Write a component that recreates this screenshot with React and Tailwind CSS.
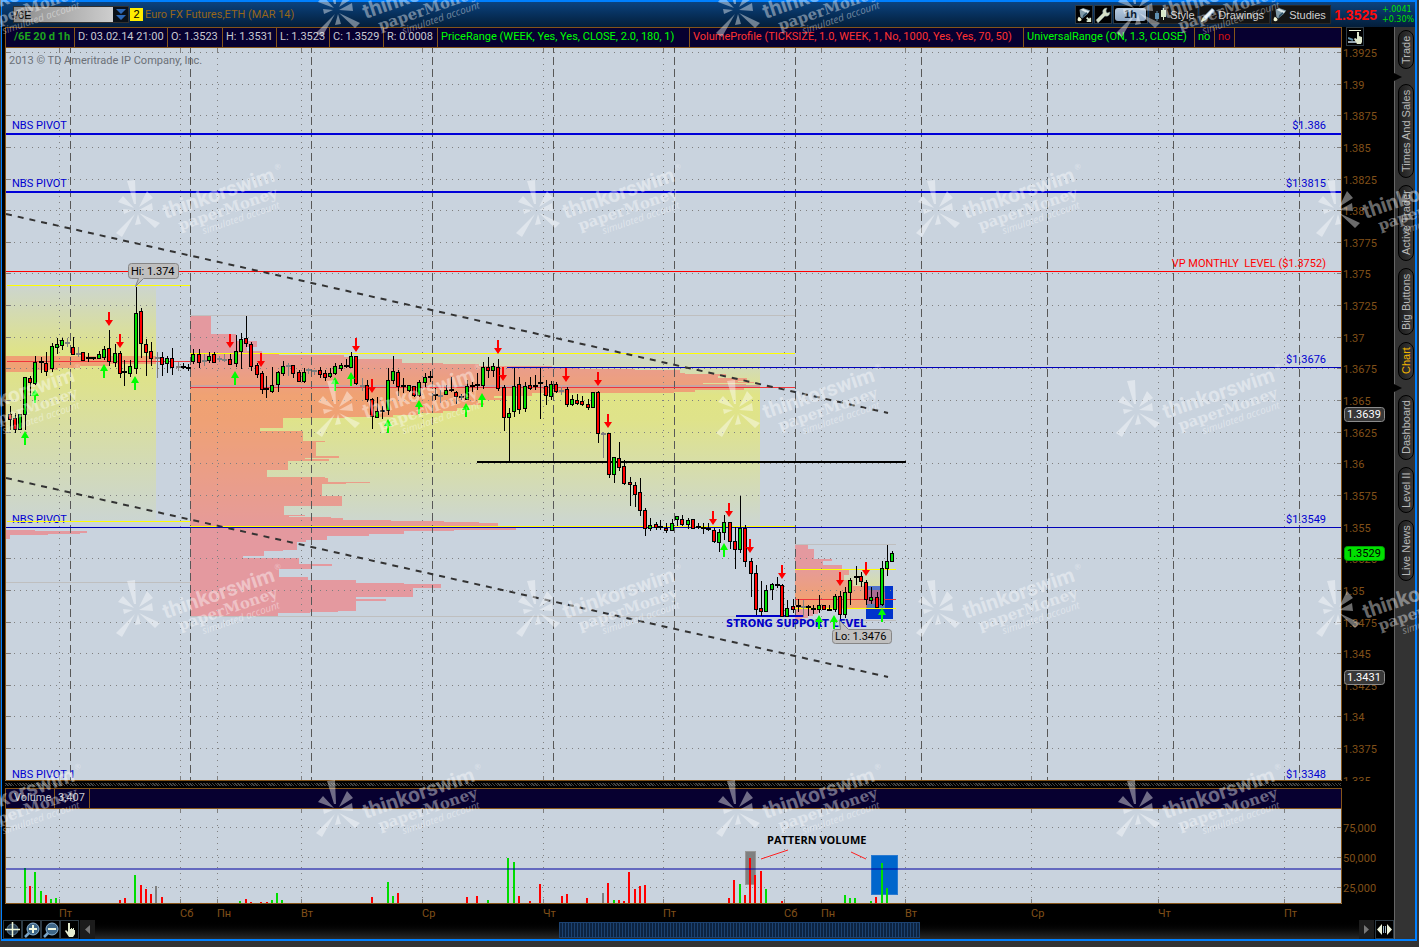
import React from "react";

const UP = "#00dd00";
const DOWN = "#ff0000";

// x, body top, body bottom, high, low, kind (g up, r down, k doji, x flat)
const CANDLES = `10,414,419,406,430,r 15,418,429,413,433,r 20,414,429,414,430,g 25,377,414,377,430,g 30,378,382,376,396,r
35,362,383,356,385,g 41,362,362,357,373,k 46,363,371,352,376,r 52,346,368,343,372,g 57,344,347,338,354,g 62,340,345,338,350,g
67,343,343,338,347,x 73,347,354,337,355,r 78,354,354,347,357,x 83,352,360,352,360,r 88,358,358,353,362,k 93,358,358,357,360,k
99,354,358,351,359,g 104,349,357,346,360,g 109,348,361,330,366,r 115,353,362,344,367,g 120,353,373,351,378,r 124,372,372,360,386,k
130,366,373,360,377,g 136,313,368,287,374,g 141,311,343,308,358,r 146,344,352,339,376,r 151,351,358,342,366,r 157,358,358,352,378,x
162,357,364,352,376,r 167,358,363,356,373,g 172,358,367,348,375,r 178,367,367,362,371,x 183,367,367,363,369,k 188,368,368,364,371,k
193,354,361,349,364,g 199,354,362,349,368,r 204,361,361,354,366,x 209,356,360,352,363,g 214,354,362,352,362,r 219,359,359,356,362,x
224,360,360,354,362,x 230,359,364,354,365,r 236,351,363,335,367,g 241,339,351,333,369,g 246,338,343,316,347,r 251,344,366,342,371,r
257,365,374,363,378,r 262,373,389,371,394,r 266,389,389,376,398,k 272,385,391,367,393,g 278,372,384,371,392,g 283,366,373,361,376,g
288,366,366,363,376,x 293,365,373,365,378,r 299,372,381,370,382,r 304,372,381,368,383,g 308,370,370,368,374,x 314,371,371,370,375,x
320,370,374,367,378,r 325,373,377,370,381,r 330,373,376,368,378,g 335,366,373,363,375,g 341,365,368,363,371,g 346,366,366,359,368,k
351,356,367,352,368,g 356,356,383,356,385,r 362,386,386,378,391,x 367,385,399,380,402,r 372,399,416,398,429,r 377,411,417,397,417,g
382,411,411,406,419,k 388,380,410,368,415,g 393,371,380,356,384,g 398,372,386,370,396,r 403,386,386,378,393,k 409,385,390,385,392,g
414,386,395,386,397,r 419,382,395,380,397,g 425,377,382,373,387,g 430,377,377,371,382,k 435,395,395,388,400,k 440,396,396,390,403,x
446,390,394,385,395,g 451,390,390,377,392,k 456,392,396,391,404,r 461,397,397,394,400,k 467,386,399,380,400,g 472,386,386,382,392,k
477,385,385,373,390,k 483,367,385,362,389,g 488,367,370,357,378,r 493,366,370,363,377,g 498,367,388,359,391,r 504,387,417,385,431,r
509,413,417,408,462,g 514,386,411,368,417,g 519,384,409,377,414,r 525,386,408,382,412,g 530,385,388,377,390,r 535,386,386,375,390,k
540,383,383,368,419,k 546,386,395,380,405,r 551,384,396,381,400,g 556,384,391,382,393,r 561,391,391,387,395,x 567,389,404,387,407,r
572,399,404,395,406,g 577,400,403,394,405,r 582,401,404,396,406,r 588,404,407,399,410,r 593,392,407,392,407,g 598,392,433,391,443,r
603,434,434,432,458,x 609,433,474,433,478,r 614,457,474,457,483,g 619,458,467,442,471,r 624,466,483,460,485,r 630,482,484,477,506,r
635,485,494,482,507,r 640,492,510,478,516,r 645,510,528,508,536,r 650,525,528,518,531,g 656,524,527,522,530,r 660,527,527,520,530,k
666,528,530,523,533,r 672,523,530,519,531,g 677,516,519,516,526,g 682,519,524,515,526,r 688,520,524,518,529,g 693,519,528,519,528,r
698,527,527,523,529,k 703,528,528,523,534,k 708,529,529,523,531,k 714,530,541,528,543,r 719,532,542,529,552,g 724,522,532,515,540,g
730,522,541,522,549,r 735,541,549,527,569,r 740,528,549,496,553,g 745,528,561,525,567,r 751,561,573,558,597,r 756,573,609,565,615,r
761,608,611,581,616,r 766,590,611,585,612,g 772,584,589,583,600,g 777,585,585,577,588,k 782,585,616,584,616,r 787,608,616,600,616,g
793,606,609,599,613,r 798,606,606,599,612,k 803,607,607,600,617,x 808,607,607,605,616,k 813,609,609,605,614,k 819,605,609,595,613,g
824,605,609,605,610,r 829,610,610,605,611,k 835,596,609,594,612,g 840,596,614,591,622,r 845,592,614,587,618,g 850,580,592,578,605,g
856,577,577,566,585,k 861,576,581,572,587,r 866,582,599,580,605,r 871,597,600,587,604,g 877,597,607,592,608,r 882,568,604,561,606,g
887,561,568,545,576,g 892,553,561,551,561,g`
  .split(/\s+/)
  .map((row) => {
    const [x, top, bottom, high, low, kind] = row.split(",");
    return { x: +x, top: +top, bottom: +bottom, high: +high, low: +low, kind };
  });

const SELL = [[109, 326], [120, 348], [230, 348], [261, 367], [356, 352], [372, 393], [498, 354], [503, 381], [566, 382], [598, 386], [608, 428], [713, 525], [729, 517], [750, 553], [782, 579], [840, 586], [866, 576]];
const BUY = [[25, 431], [35, 389], [104, 364], [135, 376], [235, 371], [335, 377], [351, 372], [388, 419], [419, 400], [466, 403], [482, 393], [724, 543], [819, 615], [834, 615], [882, 608]];

// [y, x]: from the previous y down to this one the profile reaches to x
const PROFILE_A = [[315, 211], [334, 236], [341, 257], [347, 247], [351, 262], [354, 279], [355, 344], [357, 353], [359, 402], [363, 443], [364, 479], [366, 552], [368, 580], [369, 635], [370, 680], [373, 685], [374, 726], [376, 718], [378, 747], [381, 738], [382, 754], [383, 703], [384, 746], [385, 760], [388, 744], [390, 695], [392, 674], [393, 532], [396, 494], [398, 502], [400, 478], [403, 484], [405, 466], [408, 457], [411, 443], [413, 418], [415, 393], [417, 345], [418, 283], [428, 260], [431, 303], [441, 325], [442, 316], [456, 339], [458, 305], [459, 329], [461, 288], [470, 267], [477, 325], [478, 328], [482, 370], [483, 346], [484, 322], [496, 342], [506, 284], [515, 305], [516, 289], [517, 331], [518, 343], [520, 391], [521, 444], [522, 479], [523, 498], [528, 516], [530, 454], [531, 404], [534, 369], [536, 327], [540, 306], [542, 297], [550, 283], [551, 264], [556, 243], [558, 299], [564, 332], [566, 312], [569, 279], [577, 308], [580, 356], [583, 404], [584, 441], [588, 413], [597, 356], [599, 386], [601, 356], [611, 338], [612, 310], [613, 278], [616, 190]];
const PROFILE_B = [[544, 808], [549, 814], [559, 832], [561, 823], [565, 842], [570, 849], [575, 844], [580, 853], [586, 865], [590, 880], [592, 885], [604, 867], [608, 820], [612, 818], [614, 813], [616, 808], [618, 802], [620, 795]];
const PROFILE_C = [[356, 156], [364, 110], [366, 80], [368, 58], [370, 36], [372, 6]];
const PROFILE_D = [[530, 35], [531, 87], [533, 80], [534, 48], [535, 10], [539, 6]];

const steps = (x0, rows) => `M${x0} ${rows[0][0]}${rows.map(([y, x]) => `V${y}H${x}`).join("")}H${x0}Z`;

const DOTTED = [59, 180, 217, 301, 422, 543, 663, 784, 821, 905, 1031, 1158, 1284];
const DASHED = [70, 190, 311, 432, 553, 674, 795, 921, 1047, 1173, 1299];
const DAYS = ["Пт", "Сб", "Пн", "Вт", "Ср", "Чт", "Пт", "Сб", "Пн", "Вт", "Ср", "Чт", "Пт"];
const PRICES = ["1.3925", "1.39", "1.3875", "1.385", "1.3825", "1.38", "1.3775", "1.375", "1.3725", "1.37", "1.3675", "1.365", "1.3625", "1.36", "1.3575", "1.355", "1.3525", "1.35", "1.3475", "1.345", "1.3425", "1.34", "1.3375", "1.335"];

const VOLUME = `25,868,g 30,886,r 35,872,g 41,891,g 46,895,r 51,899,g 56,898,g 120,900,r 125,898,r 135,875,g 141,885,r 146,889,r 151,894,r 156,886,x
162,897,r 240,901,g 246,899,r 251,902,r 261,902,r 267,902,r 272,900,g 277,893,g 282,900,g 372,897,r 388,882,g 393,896,g 398,893,r 467,897,r 477,896,r 488,900,g
508,858,g 514,862,g 519,896,r 530,901,r 540,884,r 562,896,r 567,894,r 587,898,r 603,893,x 608,883,r 614,900,g 619,900,r 624,901,r 629,872,r
635,889,r 640,886,r 645,885,r 729,898,r 734,880,r 740,884,g 745,895,r 750,858,r 755,875,r 761,871,r 766,889,g 782,901,r 845,895,g
850,898,g 855,898,g 871,901,g 876,897,r 882,863,g 887,888,g`
  .split(/\s+/)
  .map((row) => row.split(","));

function Candle({ x, top, bottom, high, low, kind }) {
  if (kind === "k" || kind === "x") {
    const fill = kind === "k" ? "#000" : "#808080";
    return (
      <g fill={fill}>
        <rect x={x} y={high} width="1" height={low - high} />
        <rect x={x - 2} y={top - 1} width="5" height="2" />
      </g>
    );
  }
  return (
    <g>
      <rect x={x} y={high} width="1" height={low - high} fill="#000" />
      <rect x={x - 2} y={top} width="4" height={Math.max(bottom - top + 1, 3)} fill="#000" />
      <rect x={x - 1} y={top + 1} width="2" height={Math.max(bottom - top - 1, 1)} fill={kind === "g" ? UP : DOWN} />
    </g>
  );
}

function PriceTag({ y, text, fill, stroke, color }) {
  return (
    <g>
      <rect x="1344.5" y={y + 0.5} width="40" height="14" rx="3" fill={fill} stroke={stroke} />
      <text x="1347" y={y + 11} fill={color}>{text}</text>
    </g>
  );
}

function PriceChart() {
  const gridY = PRICES.map((_, i) => Math.round(52 + i * 31.64));
  return (
    <svg viewBox="5 48 1389 733" className="block h-auto w-full font-['Roboto',sans-serif] text-[11px]" role="img" aria-label="Price chart">
      <defs>
        <linearGradient id="rangeA" x1="0" y1="0" x2="0" y2="1">
          <stop offset="0" stopColor="#ccd5ce" />
          <stop offset="0.28" stopColor="#dfe388" />
          <stop offset="0.4" stopColor="#dee28c" />
          <stop offset="1" stopColor="#cbd5d2" />
        </linearGradient>
        <linearGradient id="rangeB" x1="0" y1="0" x2="0" y2="1">
          <stop offset="0" stopColor="#cdd6cf" />
          <stop offset="0.24" stopColor="#e0e486" />
          <stop offset="0.38" stopColor="#dfe38a" />
          <stop offset="1" stopColor="#ccd6d2" />
        </linearGradient>
        <linearGradient id="rangeC" x1="0" y1="0" x2="0" y2="1">
          <stop offset="0" stopColor="#cdd6cf" />
          <stop offset="0.75" stopColor="#dfe38a" />
          <stop offset="1" stopColor="#e0e486" />
        </linearGradient>
      </defs>
      <rect x="5" y="48" width="1337" height="733" fill="#c9d3de" />

      <rect x="6" y="286" width="150" height="236" fill="url(#rangeA)" />
      <rect x="190" y="354" width="570" height="172" fill="url(#rangeB)" />
      <rect x="795" y="569" width="90" height="39" fill="url(#rangeC)" />
      <rect x="866" y="586" width="27" height="33" fill="#0033cc" />
      <rect x="866" y="586" width="19" height="22" fill="url(#rangeC)" opacity="0.4" />
      <g fill="#ff6060" fillOpacity="0.5" shapeRendering="crispEdges">
        <path d={steps(6, PROFILE_C)} />
        <path d={steps(6, PROFILE_D)} />
        <path d={steps(190, PROFILE_A)} />
        <path d={steps(795, PROFILE_B)} />
      </g>
      <rect x="190" y="385" width="570" height="2" fill="#b9a4b4" fillOpacity="0.7" />

      <g shapeRendering="crispEdges" fill="none">
        <g stroke="#808080">
          {gridY.map((y) => (
            <g key={y}>
              <path d={`M6 ${y}.5H11M1337 ${y}.5H1341`} />
              <path d={`M14 ${y}.5H1341`} strokeDasharray="1 5" />
            </g>
          ))}
          {DOTTED.map((x) => (
            <g key={x}>
              <path d={`M${x}.5 48V53M${x}.5 776V780`} />
              <path d={`M${x}.5 58V776`} strokeDasharray="1 5" />
            </g>
          ))}
        </g>
        {DASHED.map((x) => (
          <path key={x} d={`M${x}.5 48V780`} stroke="#585858" strokeDasharray="8 4" strokeDashoffset="3" />
        ))}
        <path d="M6 582.5H190M190 315.5H795M190 616.5H795M795 544.5H896M795 620.5H896" stroke="#bfbfbf" />
      </g>

      <g fill="#0000d0">
        <text x="12" y="129">NBS PIVOT</text>
        <text x="12" y="187">NBS PIVOT</text>
        <text x="12" y="523">NBS PIVOT</text>
        <text x="12" y="778">NBS PIVOT 1</text>
        <g textAnchor="end">
          <text x="1326" y="129">$1.386</text>
          <text x="1326" y="187">$1.3815</text>
          <text x="1326" y="363">$1.3676</text>
          <text x="1326" y="523">$1.3549</text>
          <text x="1326" y="778">$1.3348</text>
          <text x="1326" y="267" fill="#ff0000">VP MONTHLY&#160; LEVEL ($1.3752)</text>
        </g>
      </g>
      <text x="9" y="64" fill="#6b7077">2013 © TD Ameritrade IP Company, Inc.</text>

      <g shapeRendering="crispEdges" fill="none">
        <path d="M6 134H1341M6 192H1341" stroke="#0000d8" strokeWidth="2" />
        <path d="M6 271.5H1341" stroke="#ff0000" />
        <path d="M507 367.5H1341M6 527.5H1341" stroke="#0000b8" />
        <path d="M7 285.5H190M7 521.5H190M190 353.5H795M190 526.5H795M795 569.5H896" stroke="#ffff00" />
        <path d="M795 608.5H896" stroke="#ffff00" strokeWidth="1" />
        <path d="M7 361.5H190M190 387.5H795M795 599.5H896" stroke="#f0343c" />
        <path d="M477 462H906" stroke="#000" strokeWidth="2" />
        <path d="M736 616H803" stroke="#0000c8" strokeWidth="2" />
      </g>
      <path d="M6 214L888 413M6 478L888 677" stroke="#333" strokeWidth="2" strokeDasharray="6 6" fill="none" />

      <g shapeRendering="crispEdges">
        {CANDLES.map((c) => <Candle key={c.x} {...c} />)}
      </g>
      <text x="726" y="627" fill="#0000c8" className="font-['DejaVu_Sans',sans-serif] text-[10px] font-bold">STRONG SUPPORT LEVEL</text>
      {SELL.map(([x, y]) => (
        <path key={`${x}-${y}`} fill="#ff0000" d={`M${x} ${y}l-4 -6h3v-8h2v8h3z`} />
      ))}
      {BUY.map(([x, y]) => (
        <path key={`${x}-${y}`} fill="#00ff00" d={`M${x} ${y}l-4 7h3v7h2v-7h3z`} />
      ))}

      <g fill="#bfbfbf" stroke="#858585">
        <path d="M131.500 263.500h44a3 3 0 0 1 3 3v9a3 3 0 0 1 -3 3h-32l-8 8l3 -8h-7a3 3 0 0 1 -3 -3v-9a3 3 0 0 1 3 -3z" />
        <path d="M835.500 629.500h5l-1 -9l9 9h40a3 3 0 0 1 3 3v8a3 3 0 0 1 -3 3h-53a3 3 0 0 1 -3 -3v-8a3 3 0 0 1 3 -3z" />
      </g>
      <text x="131" y="275">Hi: 1.374</text>
      <text x="835" y="640">Lo: 1.3476</text>

      <path d="M5.500 48V780.500H1341.500V48" fill="none" stroke="#855419" />
      <g fill="#805019">
        {PRICES.map((p, i) => (
          <text key={p} x="1343" y={gridY[i] + 5}>{p}</text>
        ))}
      </g>
      <PriceTag y={407} text="1.3639" fill="#383838" stroke="#8c8c8c" color="#fff" />
      <PriceTag y={546} text="1.3529" fill="#00e000" stroke="#00a000" color="#000" />
      <PriceTag y={670} text="1.3431" fill="#383838" stroke="#8c8c8c" color="#fff" />
    </svg>
  );
}

function VolumeChart() {
  return (
    <svg viewBox="5 809 1389 111" className="block h-auto w-full font-['Roboto',sans-serif] text-[11px]" role="img" aria-label="Volume chart">
      <rect x="5" y="809" width="1337" height="95" fill="#c9d3de" />
      <g shapeRendering="crispEdges" stroke="#808080" fill="none">
        {[827, 857, 887].map((y) => (
          <g key={y}>
            <path d={`M6 ${y}.5H11M1337 ${y}.5H1341`} />
            <path d={`M14 ${y}.5H1341`} strokeDasharray="1 5" />
          </g>
        ))}
        {DOTTED.map((x) => (
          <g key={x}>
            <path d={`M${x}.5 809V813M${x}.5 899V903`} />
            <path d={`M${x}.5 819V899`} strokeDasharray="1 5" />
          </g>
        ))}
      </g>
      <rect x="745.5" y="851.5" width="10" height="33" fill="#808080" stroke="#999" />
      <rect x="871.5" y="855.5" width="26" height="39" fill="#0066cc" stroke="#2a7ad0" />
      <g shapeRendering="crispEdges">
        {VOLUME.map(([x, y, k]) => (
          <rect key={x} x={+x - 1} y={+y} width="2" height={903 - y} fill={k === "g" ? UP : k === "r" ? DOWN : "#808080"} />
        ))}
      </g>
      <rect x="6" y="868" width="1335" height="2" fill="#0000a0" fillOpacity="0.5" />
      <path d="M788 850L761 859M851 852L866 859" stroke="#ff2020" fill="none" />
      <text x="767" y="844" className="font-['Open_Sans',sans-serif] text-[11px] font-bold">PATTERN VOLUME</text>
      <path d="M5.500 809V903.500H1341.500V809" fill="none" stroke="#855419" />
      <g fill="#805019">
        <text x="1343" y="832">75,000</text>
        <text x="1343" y="862">50,000</text>
        <text x="1343" y="892">25,000</text>
        {DAYS.map((d, i) => (
          <text key={DOTTED[i]} x={DOTTED[i]} y="917">{d}</text>
        ))}
      </g>
    </svg>
  );
}

const FIELDS = [
  ["/6E 20 d 1h", "w-[69px] pl-2 font-bold text-[#1ea51e]"],
  ["D: 03.02.14 21:00", "w-[93px] pl-[3px] text-[#c8c8d0]"],
  ["O: 1.3523", "w-[55px] pl-[3px] text-[#c8c8d0]"],
  ["H: 1.3531", "w-[54px] pl-[3px] text-[#c8c8d0]"],
  ["L: 1.3523", "w-[53px] pl-[3px] text-[#c8c8d0]"],
  ["C: 1.3529", "w-[54px] pl-[3px] text-[#c8c8d0]"],
  ["R: 0.0008", "w-[54px] pl-[3px] text-[#c8c8d0]"],
  ["PriceRange (WEEK, Yes, Yes, CLOSE, 2.0, 180, 1)", "w-[252px] pl-[3px] text-[#00ff00]"],
  ["VolumeProfile (TICKSIZE, 1.0, WEEK, 1, No, 1000, Yes, Yes, 70, 50)", "w-[334px] pl-[3px] text-[#ff3232]"],
  ["UniversalRange (ON, 1.3, CLOSE)", "w-[171px] pl-[3px] text-[#00ff00]"],
  ["no", "w-[20px] pl-[3px] text-[#00ff00]"],
  ["no", "w-[20px] pl-[3px] text-[#d01010]"],
];

const TABS = [
  ["Trade", "h-[39px] mb-[15px]"],
  ["Times And Sales", "h-[94px] mb-[7px]"],
  ["Active Trader", "h-[76px] mb-[7px]"],
  ["Big Buttons", "h-[67px] mb-[7px]"],
  ["Chart", "h-[38px] mb-[15px]"],
  ["Dashboard", "h-[65px] mb-[7px]"],
  ["Level II", "h-[46px] mb-[7px]"],
  ["Live News", "h-[61px]"],
];

function Flask() {
  return (
    <>
      <path d="M4 3l4-2 8 3-3 4-6 5-2-2z" fill="#7f9aa8" />
      <path d="M5 3l3-1 7 3-2 2z" fill="#dce8ea" />
      <path d="M8 9l4-3 1 1-6 6z" fill="#2f5268" />
      <path d="M3 11q-3 5 1 5 4-1 1-4z" fill="#f4f8d8" />
    </>
  );
}

function Tool({ label, className, children }) {
  return (
    <button aria-label={label} className={`flex h-[19px] shrink-0 items-center justify-center border border-[#2d3a44] bg-black ${className}`}>
      {children}
    </button>
  );
}

const WATERMARKS = [
  ...[10, 410, 810].flatMap((y) => [-64, 336, 736, 1136].map((x) => [x, y])),
  ...[210, 610].flatMap((y) => [136, 536, 936, 1336].map((x) => [x, y])),
];

function Watermark() {
  return (
    <svg className="pointer-events-none absolute inset-0 h-full w-full" aria-hidden="true">
      {WATERMARKS.map(([x, y]) => (
        <g key={`${x}-${y}`} transform={`translate(${x} ${y})`} fill="#fff" fillOpacity="0.42">
          <path d="M-9 -29L-1 -30L0 -6H-2zM11 -19L17 -12L3 -3zM-13 -14L-18 -8L-2 -2zM-13 -1L-12 4L-3 0zM16 -7L17 1L3 0zM24 13L19 18L3 3zM-1 15L5 14L2 4zM-20 23L-14 27L-1 4z" />
          <g transform="rotate(-19)">
            <text x="25" y="18" className="font-['Roboto',sans-serif] text-[21px] font-bold">thinkorswim</text>
            <text x="35" y="34" className="font-['DejaVu_Serif',serif] text-[15px] font-bold">paperMoney</text>
            <text x="56" y="45" className="font-['Open_Sans',sans-serif] text-[10px] italic">simulated account</text>
            <text x="145" y="8" className="font-['Liberation_Sans',sans-serif] text-[8px]">®</text>
          </g>
        </g>
      ))}
    </svg>
  );
}

export default function App() {
  return (
    <div className="relative flex min-h-screen flex-col overflow-hidden bg-[#333] pb-[6px] pl-px font-['Liberation_Sans',sans-serif] text-[11px] leading-[14px]">
      <div className="mr-[2px] flex flex-1 flex-col border-t-2 border-r-2 border-b-2 border-l border-[#0080ff] bg-black">
        <header className="flex h-[25px] items-center bg-gradient-to-b from-[#0b4380] to-[#041e3a] pl-[11px]">
          <div className="flex h-[17px] items-center border border-[#303030] bg-gradient-to-r from-[#8c8c8c] to-[#d8d8d8]">
            <input aria-label="Symbol" defaultValue="/6E" className="h-[15px] w-[99px] bg-transparent pl-px text-black outline-none" />
            <button aria-label="Choose symbol" className="flex h-[15px] w-[15px] items-center justify-center bg-[#0a1018]">
              <svg width="10" height="12" viewBox="0 0 10 12"><path d="M0 0h10L5 5zM0 6h10l-5 5z" fill="#2c68b8" /></svg>
            </button>
          </div>
          <button className="ml-px h-[13px] w-[13px] bg-[#ffee00] text-center leading-[13px] text-black">2</button>
          <h1 className="ml-[2px] flex-1 font-['Roboto',sans-serif] text-[11px] whitespace-nowrap text-[#95661a]">Euro FX Futures,ETH (MAR 14)</h1>
          <div className="flex h-full items-center gap-px text-[#d0d0d0]">
            <Tool label="Quick study" className="w-[18px]">
              <svg width="16" height="16" viewBox="0 0 18 18"><Flask /><path d="M12 12l4 4M16 12v4h-4" stroke="#d8e8d0" strokeWidth="2" fill="none" /></svg>
            </Tool>
            <Tool label="Settings" className="w-[18px]">
              <svg width="16" height="16" viewBox="0 0 16 16"><path d="M1 13l7-7c-1-3 1-5 4-5L11 4l1 2 3-1c0 3-2 5-5 4l-7 7z" fill="#d5e0c8" stroke="#6d8590" strokeWidth="0.500" /></svg>
            </Tool>
            <button className="flex h-[19px] w-[35px] items-center border border-[#2d3a44] bg-black p-px">
              <span className="h-[13px] w-full rounded-[3px] bg-gradient-to-b from-[#b8cce0] to-[#8fa8c4] text-center leading-[13px] font-bold text-[#0a1c30]">1h</span>
            </button>
            <button className="flex h-[19px] w-[49px] items-center gap-1 border border-[#282828] bg-[#141414] pl-1">
              <svg width="12" height="14" viewBox="0 0 12 14"><path d="M1 5h4v6H1zM2.500 3h1v10h-1z" fill="#5f8fb0" /><path d="M7 2h5v7H7zM9 0h1v12H9z" fill="#d8e8c8" /></svg>
              <span>Style</span>
            </button>
            <button className="flex h-[19px] w-[71px] items-center gap-[3px] border border-[#282828] bg-[#141414] pl-px">
              <svg width="14" height="14" viewBox="0 0 14 14"><path d="M0 14l2-5 9-9 3 3-9 9z" fill="#8fb0d0" /><path d="M3 9l8-8 2 1-8 9z" fill="#eef6f8" /><path d="M0 14l2-5 3 3z" fill="#e8ecc8" /></svg>
              <span>Drawings</span>
            </button>
            <button className="flex h-[19px] w-[60px] items-center gap-px border border-[#282828] bg-[#141414]">
              <svg width="16" height="16" viewBox="0 0 18 18"><Flask /></svg>
              <span>Studies</span>
            </button>
          </div>
          <strong className="ml-[3px] text-[14px] text-[#ff0a0a]">1.3525</strong>
          <div className="ml-[5px] w-[33px] font-['DejaVu_Sans',sans-serif] text-[8px] leading-[10px] whitespace-nowrap text-[#00e000]">
            <p>+.0041</p>
            <p>+0.30%</p>
          </div>
        </header>

        <div className="flex flex-1">
          <main className="flex min-w-0 flex-1 flex-col">
            <div className="flex flex-col pl-[3px]">
              <div className="flex h-[21px]">
                <div className="flex min-w-0 flex-1 overflow-hidden border border-[#855419] bg-[#070030] font-['Roboto',sans-serif] leading-[17px] whitespace-nowrap">
                  {FIELDS.map(([text, cls], i) => (
                    <span key={i} className={`shrink-0 border-r border-[#855419] ${cls}`}>{text}</span>
                  ))}
                </div>
                <div className="w-[52px] pl-[4px]">
                  <Tool label="Chart cursor" className="w-[18px]">
                    <svg width="15" height="15" viewBox="0 0 15 15"><path d="M1 1.500h12" stroke="#e8f0d8" /><path d="M0 13h8" stroke="#c8dce8" strokeWidth="1.500" /><path d="M0 9l5 2" stroke="#5d8ea8" strokeWidth="2" /><path d="M9 3h2v4l3 1v5l-1 2H9l-3-5 1-1 2 1z" fill="#dfe8cc" /></svg>
                  </Tool>
                </div>
              </div>
              <PriceChart />
              <div className="flex h-[7px] items-center">
                <div className="h-[3px] flex-1 bg-[repeating-linear-gradient(45deg,#444_0px,#444_1px,#000_1px,#000_2px)]" />
                <div className="w-[53px]" />
              </div>
              <div className="flex h-[21px]">
                <div className="flex flex-1 border border-[#855419] bg-[#070030] font-['Roboto',sans-serif] leading-[17px] text-[#c8c8d0]">
                  <span className="w-[49px] border-r border-[#855419] pl-2">Volume</span>
                  <span className="w-[35px] border-r border-[#855419] pl-[3px]">3,407</span>
                </div>
                <div className="w-[52px]" />
              </div>
              <VolumeChart />
            </div>
            <div className="flex h-[19px] pl-px">
              <Tool label="Crosshair" className="w-[19px]">
                <svg width="15" height="15" viewBox="0 0 15 15"><circle cx="7.500" cy="7.500" r="5.500" fill="#2c4256" stroke="#5a7890" /><path d="M7.500 0v15M0 7.500h15" stroke="#f0f8d8" strokeWidth="1.500" /></svg>
              </Tool>
              <Tool label="Zoom in" className="w-[19px]">
                <svg width="16" height="16" viewBox="0 0 16 16"><path d="M1 15l4-4" stroke="#7aa5c8" strokeWidth="2.500" /><circle cx="9" cy="7" r="6" fill="#3f6788" stroke="#8cb4d4" /><path d="M9 3v8M5 7h8" stroke="#f0f8e0" strokeWidth="2" /></svg>
              </Tool>
              <Tool label="Zoom out" className="w-[19px]">
                <svg width="16" height="16" viewBox="0 0 16 16"><path d="M1 15l4-4" stroke="#7aa5c8" strokeWidth="2.500" /><circle cx="9" cy="7" r="6" fill="#3f6788" stroke="#8cb4d4" /><path d="M5 7h8" stroke="#f0f8e0" strokeWidth="2" /></svg>
              </Tool>
              <Tool label="Pan" className="w-[19px]">
                <svg width="14" height="15" viewBox="0 0 14 15"><path d="M5 1h2v6h1V6h1v1h1V6h1v2h1v4l-2 3H6L2 9l1-1 2 2z" fill="#e4ecd0" /></svg>
              </Tool>
              <button aria-label="Scroll left" className="ml-px flex w-[15px] items-center justify-center bg-[#1c1c1c]">
                <svg width="5" height="9" viewBox="0 0 5 9"><path d="M5 0v9L0 4.500z" fill="#777" /></svg>
              </button>
              <div className="flex flex-1 bg-gradient-to-b from-black to-[#2a2a2a] pt-[2px] pb-px">
                <div className="ml-[36.700%] w-[28.600%] border border-[#1c4270] bg-[repeating-linear-gradient(90deg,#0c2340_0px,#0c2340_2px,#1c4270_2px,#1c4270_3px)]" />
              </div>
              <button aria-label="Scroll right" className="flex w-[15px] items-center justify-center bg-[#1c1c1c]">
                <svg width="5" height="9" viewBox="0 0 5 9"><path d="M0 0v9l5-4.500z" fill="#777" /></svg>
              </button>
              <Tool label="Fit width" className="ml-px w-[19px]">
                <svg width="15" height="11" viewBox="0 0 15 11"><path d="M5 0v11L0 5.500zM10 0v11l5-5.500z" fill="#eef4dc" /><path d="M6.500 2v7M8.500 2v7" stroke="#9fb8c8" /></svg>
              </Tool>
            </div>
          </main>

          <aside className="relative flex w-[21px] shrink-0 flex-col border-l border-[#666] bg-[#333] pt-[3px] pl-[3px]">
            <svg className="absolute top-[46px] -left-px" width="8" height="8" viewBox="0 0 8 8"><path d="M0 0l8 4-8 4z" /></svg>
            <svg className="absolute top-[357px] -left-px" width="8" height="8" viewBox="0 0 8 8"><path d="M0 0l8 4-8 4z" /></svg>
            {TABS.map(([name, cls]) => (
              <button
                key={name}
                className={`flex w-[16px] rotate-180 items-center justify-center rounded-[8px] border border-black bg-gradient-to-r from-[#3a3a3a] to-[#1c1c1c] whitespace-nowrap [writing-mode:vertical-rl] ${name === "Chart" ? "text-[#f0b400]" : "text-[#b8b8b8]"} ${cls}`}
              >
                {name}
              </button>
            ))}
          </aside>
        </div>
      </div>
      <Watermark />
    </div>
  );
}
